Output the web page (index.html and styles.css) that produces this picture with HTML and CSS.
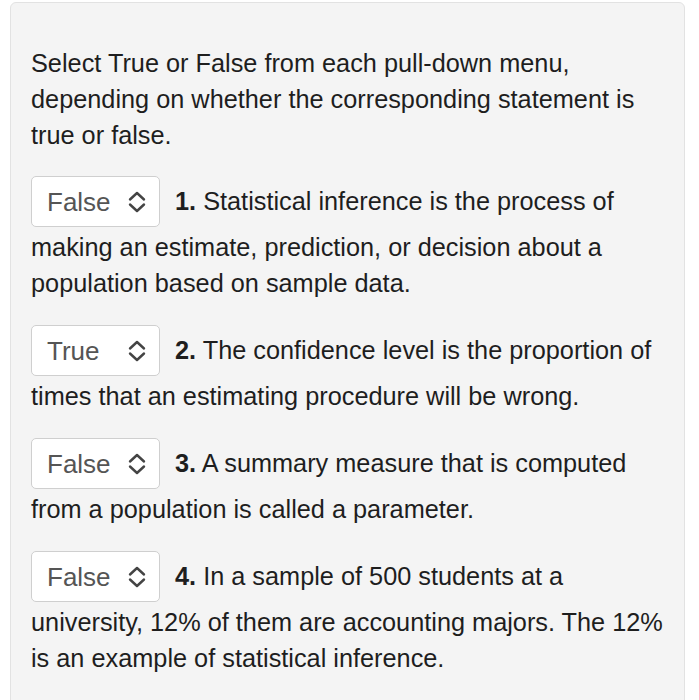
FILE: index.html
```html
<!DOCTYPE html>
<html>
<head>
<meta charset="utf-8">
<link rel="stylesheet" href="styles.css">
</head>
<body>
<div class="panel">
  <p class="intro">Select True or False from each pull-down menu,<br>depending on whether the corresponding statement is<br>true or false.</p>
  <p class="item"><span class="sel"><span class="val">False</span><svg class="chev" viewBox="0 0 18 22" width="18" height="22"><path d="M2 8.5 L9 2 L16 8.5 M2 13.5 L9 20 L16 13.5" fill="none" stroke="#444" stroke-width="2.4" stroke-linecap="round" stroke-linejoin="round"/></svg></span><b>1.</b> Statistical inference is the process of<br>making an estimate, prediction, or decision about a<br>population based on sample data.</p>
  <p class="item"><span class="sel"><span class="val">True</span><svg class="chev" viewBox="0 0 18 22" width="18" height="22"><path d="M2 8.5 L9 2 L16 8.5 M2 13.5 L9 20 L16 13.5" fill="none" stroke="#444" stroke-width="2.4" stroke-linecap="round" stroke-linejoin="round"/></svg></span><b>2.</b> The confidence level is the proportion of<br>times that an estimating procedure will be wrong.</p>
  <p class="item"><span class="sel"><span class="val">False</span><svg class="chev" viewBox="0 0 18 22" width="18" height="22"><path d="M2 8.5 L9 2 L16 8.5 M2 13.5 L9 20 L16 13.5" fill="none" stroke="#444" stroke-width="2.4" stroke-linecap="round" stroke-linejoin="round"/></svg></span><b>3.</b> A summary measure that is computed<br>from a population is called a parameter.</p>
  <p class="item"><span class="sel"><span class="val">False</span><svg class="chev" viewBox="0 0 18 22" width="18" height="22"><path d="M2 8.5 L9 2 L16 8.5 M2 13.5 L9 20 L16 13.5" fill="none" stroke="#444" stroke-width="2.4" stroke-linecap="round" stroke-linejoin="round"/></svg></span><b>4.</b> In a sample of 500 students at a<br>university, 12% of them are accounting majors. The 12%<br>is an example of statistical inference.</p>
</div>
</body>
</html>
```
FILE: styles.css
```css
html, body {
  margin: 0;
  padding: 0;
  background: #ffffff;
  overflow: hidden;
}
body {
  font-family: "Liberation Sans", Arial, Helvetica, sans-serif;
  color: #1e1e1e;
  font-size: 25.3px;
  line-height: 36px;
}
.panel {
  margin: 2px 0 0 10px;
  width: 675px;
  box-sizing: border-box;
  min-height: 760px;
  background: #f4f4f4;
  border: 1px solid #e2e2e2;
  border-radius: 6px;
  padding: 42px 6px 0 20px;
}
p {
  margin: 0;
  white-space: nowrap;
}
.intro {
  margin-bottom: 24px;
}
.item {
  margin-bottom: 25px;
}
.sel {
  display: inline-flex;
  align-items: center;
  box-sizing: border-box;
  width: 129px;
  height: 51px;
  margin: 0 15px 1px 0;
  padding: 0 13px 0 15px;
  background: #ffffff;
  border: 1px solid #cfcfcf;
  border-radius: 5px;
  vertical-align: middle;
  position: relative;
  top: -1px;
  font-size: 26px;
  color: #555555;
}
.val {
  flex: 1;
}
.chev {
  display: block;
  flex: none;
}
b {
  font-weight: bold;
}
```
